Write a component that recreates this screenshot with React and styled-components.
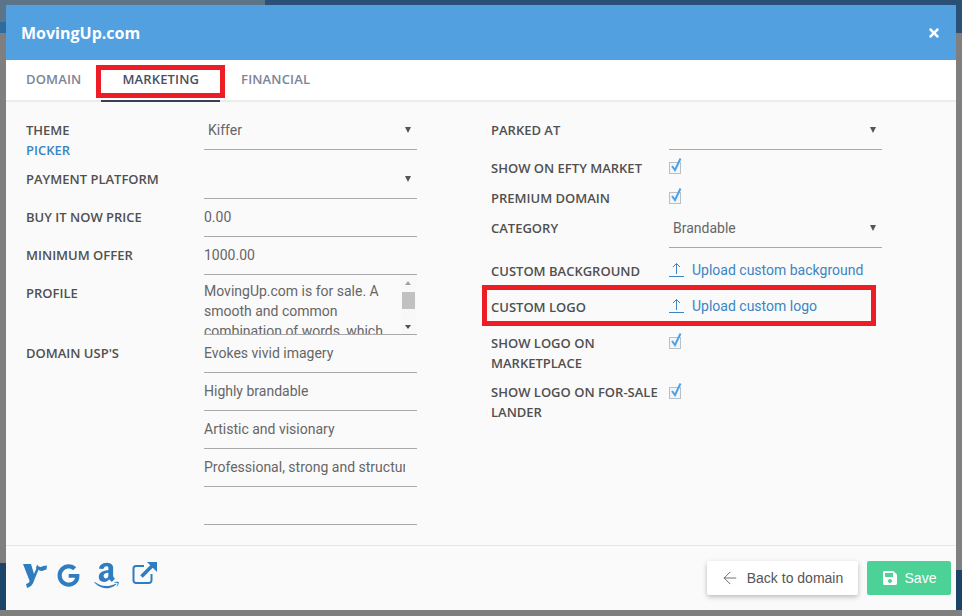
import styled, { createGlobalStyle } from "styled-components";
import { FaAmazon, FaGoogle, FaSave, FaTimes } from "react-icons/fa";
import { ArrowLeft } from "lucide-react";

const GlobalStyle = createGlobalStyle`
  html, body {
    margin: 0;
    padding: 0;
    height: 100%;
  }
  body {
    overflow: hidden;
    font-family: "Roboto", "Liberation Sans", sans-serif;
  }
  * {
    box-sizing: border-box;
  }
`;

const Backdrop = styled.div`
  width: 962px;
  height: 616px;
  padding: 5px 6px 6px;
  background:
    linear-gradient(90deg, #1c4468 6px, transparent 6px) 0 563px / 100% 47px no-repeat,
    linear-gradient(90deg, transparent 956px, #1c4468 956px) 0 570px / 100% 40px no-repeat,
    linear-gradient(90deg, #2f6c9e 6px, transparent 6px) 0 22px / 100% 11px no-repeat,
    linear-gradient(90deg, #5c7488 265px, #2a5075 265px) 0 0 / 100% 33px no-repeat,
    #7f7f7f;
`;

const Modal = styled.div`
  width: 950px;
  height: 605px;
  display: flex;
  flex-direction: column;
  background: #fafafa;
`;

const Header = styled.header`
  height: 55px;
  flex: none;
  display: flex;
  align-items: center;
  justify-content: space-between;
  padding: 0 15px;
  background: #52a0e0;
  color: #fff;
`;

const Title = styled.h1`
  margin: 0;
  font: 700 16px "Open Sans", sans-serif;
`;

const Close = styled.span`
  display: flex;
  font-size: 14px;
`;

const Tabs = styled.nav`
  height: 42px;
  flex: none;
  display: flex;
  background: #fff;
  border-bottom: 2px solid #ececec;
`;

const Tab = styled.a`
  position: relative;
  height: 42px;
  padding: 10px 21px 0;
  font: 600 13px "Open Sans", sans-serif;
  letter-spacing: 0.15px;
  color: ${(p) => (p.$active ? "#4a4f5f" : "#7c8497")};
  border-bottom: 2px solid ${(p) => (p.$active ? "#3a3f55" : "transparent")};

  &:first-child {
    padding-left: 20px;
    padding-right: 20px;
  }
`;

const Callout = styled.span`
  position: absolute;
  border: 5px solid #ee1c25;
  pointer-events: none;
`;

const TabCallout = styled(Callout)`
  left: -5px;
  top: 5px;
  width: 129px;
  height: 33px;
`;

const RowCallout = styled(Callout)`
  left: -9px;
  top: -3px;
  width: 394px;
  height: 41px;
`;

const Body = styled.main`
  flex: 1;
  display: flex;
  padding: 10px 0 0 20px;
`;

const Column = styled.section`
  width: 391px;
  display: flex;
  flex-direction: column;

  & + & {
    margin-left: 74px;
  }
`;

const Row = styled.div`
  position: relative;
  display: grid;
  grid-template-columns: 178px 213px;
  min-height: ${(p) => p.$height || 38}px;
  margin-bottom: ${(p) => p.$gap || 0}px;
`;

const Label = styled.div`
  padding-top: ${(p) => p.$top ?? 8}px;
  font: 600 13px/20px "Open Sans", sans-serif;
  color: #505050;
`;

const PickerLink = styled.div`
  color: #3a85c4;
`;

const Stack = styled.div`
  display: flex;
  flex-direction: column;
`;

const Select = styled.div`
  height: ${(p) => p.$height || 38}px;
  display: flex;
  align-items: center;
  justify-content: space-between;
  padding: 0 6px 1px 4px;
  padding-bottom: ${(p) => (p.$height ? 10 : 1)}px;
  font-size: 14px;
  color: #666;
  border-bottom: 1px solid #a8a8a8;
`;

const Caret = styled.span`
  width: 0;
  height: 0;
  border-left: 3px solid transparent;
  border-right: 3px solid transparent;
  border-top: 6px solid #555;
`;

const Input = styled.input`
  display: block;
  width: 100%;
  height: 38px;
  padding: 0 12px 1px 0;
  border: 0;
  border-bottom: 1px solid #a8a8a8;
  border-radius: 0;
  outline: 0;
  background: transparent;
  font: 400 14px "Roboto", sans-serif;
  color: #666;
`;

const TextBox = styled.div`
  height: 60px;
  display: flex;
  overflow: hidden;
  border-bottom: 1px solid #a8a8a8;
`;

const TextBody = styled.p`
  flex: 1;
  margin: 0;
  padding: 6px 10px 0 0;
  font-size: 14px;
  line-height: 20px;
  color: #666;
`;

const Scrollbar = styled.div`
  position: relative;
  width: 15px;
  flex: none;
  margin-right: 1px;
  background: #f8f8f8;
`;

const Thumb = styled.div`
  position: absolute;
  left: 0;
  top: 17px;
  width: 13px;
  height: 17px;
  margin-left: 1px;
  background: #c1c1c1;
`;

const ScrollArrow = styled.span`
  position: absolute;
  left: 4px;
  width: 0;
  height: 0;
  border-left: 3.5px solid transparent;
  border-right: 3.5px solid transparent;
  ${(p) =>
    p.$down
      ? "bottom: 5px; border-top: 4px solid #505050;"
      : "top: 6px; border-bottom: 4px solid #a3a3a3;"}
`;

const UploadLink = styled.a`
  display: flex;
  align-items: center;
  gap: 8px;
  height: 36px;
  font-size: 14px;
  color: #3a85c4;

  svg {
    flex: none;
  }
`;

const CheckWrap = styled.span`
  display: block;
  width: 14px;
  height: 16px;
  margin-top: ${(p) => p.$top ?? 0}px;
`;

const Footer = styled.footer`
  height: 65px;
  flex: none;
  display: flex;
  align-items: flex-start;
  justify-content: space-between;
  padding: 15px 5px 0 17px;
  border-top: 1px solid #e6e6e6;
`;

const Links = styled.div`
  height: 28px;
  display: flex;
  align-items: center;
  gap: 12px;
  color: #2f7dc0;
`;

const YahooSvg = styled.svg`
  margin-right: -2px;
`;

const ExternalSvg = styled.svg`
  align-self: flex-start;
  margin: 1px 0 0 -1px;
`;

const Buttons = styled.div`
  display: flex;
  gap: 9px;
`;

const Button = styled.button`
  height: 34px;
  display: flex;
  align-items: center;
  justify-content: center;
  border: 0;
  border-radius: 2px;
  font-size: 14px;
  box-shadow: 0 2px 5px rgba(0, 0, 0, 0.25);
`;

const BackButton = styled(Button)`
  width: 151px;
  gap: 7px;
  padding-right: 8px;
  background: #fff;
  color: #555;
`;

const SaveButton = styled(Button)`
  width: 84px;
  gap: 7px;
  padding-right: 6px;
  background: #4cd297;
  color: #fff;
  font-weight: 500;
  box-shadow: none;
`;

const UploadIcon = () => (
  <svg width="15" height="16" viewBox="0 0 15 16" fill="none" stroke="#3a85c4" strokeWidth="1">
    <path d="M7.5 12V1.5M4 5l3.5-3.5L11 5M0 14.5h15" />
  </svg>
);

const CheckIcon = () => (
  <svg width="14" height="16" viewBox="0 0 14 16" fill="none">
    <rect x="0.5" y="4.5" width="11" height="11" fill="#f3f5f7" stroke="#b4c0cc" />
    <path d="M3 8l3 4L11.500 0.500" stroke="#4ea1e4" strokeWidth="2" />
  </svg>
);

const YahooIcon = () => (
  <YahooSvg width="24" height="25" viewBox="0 0 24 25" fill="#2f7dc0">
    <path d="M0 1h8l3 10 3-7h2.500l-6 15c-1 3-3 5-6.500 6l-1-4c2-.4 3-1.200 3.600-3z" />
    <path d="M14 1.500c2 3 4.500 3 6 1.500l4-.5-.5 4c-1.500.3-3 1.500-5 1.500-2 0-4-1.500-5.500-3z" />
  </YahooSvg>
);

const ExternalIcon = () => (
  <ExternalSvg width="26" height="22" viewBox="0 0 26 22" fill="none" stroke="#2f7dc0">
    <path d="M12 4H4a2.500 2.500 0 0 0-2.500 2.500v12A2.500 2.500 0 0 0 4 21h13a2.500 2.500 0 0 0 2.500-2.500V12" strokeWidth="2" />
    <path d="M9.500 14.500L20 4" strokeWidth="3.500" />
    <path d="M15 0h10v10z" fill="#2f7dc0" stroke="none" />
  </ExternalSvg>
);

const usps = [
  "Evokes vivid imagery",
  "Highly brandable",
  "Artistic and visionary",
  "Professional, strong and structured",
  "",
];

const App = () => {
  return (
    <Backdrop>
      <GlobalStyle />
      <Modal>
        <Header>
          <Title>MovingUp.com</Title>
          <Close>
            <FaTimes />
          </Close>
        </Header>
        <Tabs>
          <Tab>DOMAIN</Tab>
          <Tab $active>
            MARKETING
            <TabCallout />
          </Tab>
          <Tab>FINANCIAL</Tab>
        </Tabs>
        <Body>
          <Column>
            <Row $gap={1}>
              <Label>
                THEME
                <PickerLink>PICKER</PickerLink>
              </Label>
              <Select>
                Kiffer
                <Caret />
              </Select>
            </Row>
            <Row>
              <Label>PAYMENT PLATFORM</Label>
              <Select>
                <span />
                <Caret />
              </Select>
            </Row>
            <Row>
              <Label>BUY IT NOW PRICE</Label>
              <Input readOnly value="0.00" />
            </Row>
            <Row>
              <Label>MINIMUM OFFER</Label>
              <Input readOnly value="1000.00" />
            </Row>
            <Row $height={60}>
              <Label>PROFILE</Label>
              <TextBox>
                <TextBody>
                  MovingUp.com is for sale. A smooth and common combination of words, which
                  conveys progress and ambition.
                </TextBody>
                <Scrollbar>
                  <ScrollArrow />
                  <Thumb />
                  <ScrollArrow $down />
                </Scrollbar>
              </TextBox>
            </Row>
            <Row>
              <Label>DOMAIN USP'S</Label>
              <Stack>
                {usps.map((usp, i) => (
                  <Input key={i} readOnly value={usp} />
                ))}
              </Stack>
            </Row>
          </Column>
          <Column>
            <Row $gap={8}>
              <Label>PARKED AT</Label>
              <Select>
                <span />
                <Caret />
              </Select>
            </Row>
            <Row $height={30}>
              <Label $top={0}>SHOW ON EFTY MARKET</Label>
              <CheckWrap>
                <CheckIcon />
              </CheckWrap>
            </Row>
            <Row $height={30}>
              <Label $top={0}>PREMIUM DOMAIN</Label>
              <CheckWrap>
                <CheckIcon />
              </CheckWrap>
            </Row>
            <Row $height={30} $gap={4}>
              <Label $top={0}>CATEGORY</Label>
              <Select $height={30}>
                Brandable
                <Caret />
              </Select>
            </Row>
            <Row $height={36}>
              <Label $top={9}>CUSTOM BACKGROUND</Label>
              <UploadLink>
                <UploadIcon />
                Upload custom background
              </UploadLink>
            </Row>
            <Row $height={36}>
              <Label $top={9}>CUSTOM LOGO</Label>
              <UploadLink>
                <UploadIcon />
                Upload custom logo
              </UploadLink>
              <RowCallout />
            </Row>
            <Row $height={49}>
              <Label $top={9}>
                SHOW LOGO ON
                <br />
                MARKETPLACE
              </Label>
              <CheckWrap $top={9}>
                <CheckIcon />
              </CheckWrap>
            </Row>
            <Row $height={50}>
              <Label $top={9}>
                SHOW LOGO ON FOR-SALE
                <br />
                LANDER
              </Label>
              <CheckWrap $top={10}>
                <CheckIcon />
              </CheckWrap>
            </Row>
          </Column>
        </Body>
        <Footer>
          <Links>
            <YahooIcon />
            <FaGoogle size={23} />
            <FaAmazon size={29} />
            <ExternalIcon />
          </Links>
          <Buttons>
            <BackButton>
              <ArrowLeft size={20} strokeWidth={1} />
              Back to domain
            </BackButton>
            <SaveButton>
              <FaSave size={16} />
              Save
            </SaveButton>
          </Buttons>
        </Footer>
      </Modal>
    </Backdrop>
  );
};

export default App;
